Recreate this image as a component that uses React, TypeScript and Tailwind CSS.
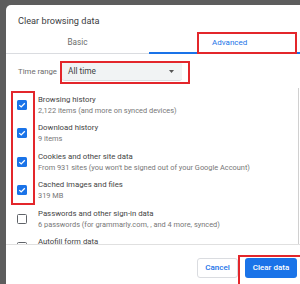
import React from "react";

const items = [
  { t: "Browsing history", s: "2,122 items (and more on synced devices)", c: true },
  { t: "Download history", s: "9 items", c: true },
  { t: "Cookies and other site data", s: "From 931 sites (you won't be signed out of your Google Account)", c: true },
  { t: "Cached images and files", s: "319 MB", c: true },
  { t: "Passwords and other sign-in data", s: "6 passwords (for grammarly.com, , and 4 more, synced)", c: false },
  { t: "Autofill form data", s: "", c: false },
];

function Box({ checked }: { checked: boolean }) {
  return checked ? (
    <div className="w-[10px] h-[10px] rounded-[1.5px] bg-[#1a73e8] flex items-center justify-center shrink-0">
      <svg width="8" height="8" viewBox="0 0 8 8">
        <path d="M1.3 4.1 L3.2 5.9 L6.8 2.2" fill="none" stroke="white" strokeWidth="1.3" />
      </svg>
    </div>
  ) : (
    <div className="w-[10px] h-[10px] rounded-[1.5px] border-[1.5px] border-[#5f6368] shrink-0" />
  );
}

export default function App() {
  return (
    <div
      className="relative w-[300px] h-[284px] overflow-hidden bg-[#5d5d5d]"
      style={{ fontFamily: "Roboto, 'Liberation Sans', sans-serif" }}
    >
      <div className="ml-[6px] mt-[5px] w-[303px] h-[290px] bg-white rounded-t-[5px] flex flex-col">
        <div className="pl-[12px] pt-[10px] pb-[5px] h-[27px] text-[9.2px] leading-[12px] text-[#3c4043]">
          Clear browsing data
        </div>
        <div className="flex h-[22px] border-b border-[#dadce0] relative">
          <div className="w-[143px] flex items-center justify-center text-[8.2px] text-[#6b6b6b]">Basic</div>
          <div className="flex-1 flex items-center pl-[63px] text-[8px] text-[#1a73e8]">Advanced</div>
          <div className="absolute left-[143px] right-0 bottom-[-1px] h-[2px] bg-[#1a73e8]" />
        </div>
        <div className="flex items-center mt-[8px] h-[19px] pl-[12px]">
          <span className="text-[7.8px] text-[#6b6b6b] w-[44px]">Time range</span>
          <div className="w-[120px] h-[19px] bg-[#f1f3f4] rounded-[3px] flex items-center justify-between pl-[6px] pr-[8px] border-b border-[#dadce0]">
            <span className="text-[8.3px] text-[#3c4043]">All time</span>
            <svg width="5" height="3" viewBox="0 0 5 3">
              <path d="M0 0 L5 0 L2.5 3 Z" fill="#555" />
            </svg>
          </div>
        </div>
        <div className="mt-[7px] h-[157px] overflow-hidden border-b border-[#e0e0e0] pt-[5.5px] pr-[11px] relative">
          {items.map((it, i) => (
            <div key={i} className="flex items-start h-[28.5px] pl-[11px]">
              <div className="h-[22px] flex items-center">
                <Box checked={it.c} />
              </div>
              <div className="ml-[11px] flex flex-col">
                <span className="text-[7.8px] leading-[11px] text-[#444] whitespace-nowrap">{it.t}</span>
                <span className="text-[7.4px] leading-[11px] text-[#777] whitespace-nowrap">{it.s}</span>
              </div>
            </div>
          ))}
          <div className="absolute left-[292px] top-0 bottom-0 w-px bg-[#d0d0d0]" />
        </div>
        <div className="flex justify-end gap-[7px] pr-[12px] pt-[13px]">
          <button className="w-[41px] h-[20px] rounded-[3px] border border-[#dadce0] text-[8px] font-medium text-[#1a73e8] bg-white">
            Cancel
          </button>
          <button className="w-[52px] h-[20px] rounded-[3px] bg-[#1a73e8] text-[8px] font-medium text-white">
            Clear data
          </button>
        </div>
      </div>
      <div className="absolute left-[197px] top-[32px] w-[100px] h-[22px] border-2 border-[#e3262b]" />
      <div className="absolute left-[60px] top-[61px] w-[130px] h-[23px] border-2 border-[#e3262b]" />
      <div className="absolute left-[11px] top-[91px] w-[24px] h-[114px] border-2 border-[#e3262b]" />
      <div className="absolute left-[238px] top-[255px] w-[64px] h-[32px] border-2 border-[#e3262b]" />
    </div>
  );
}
